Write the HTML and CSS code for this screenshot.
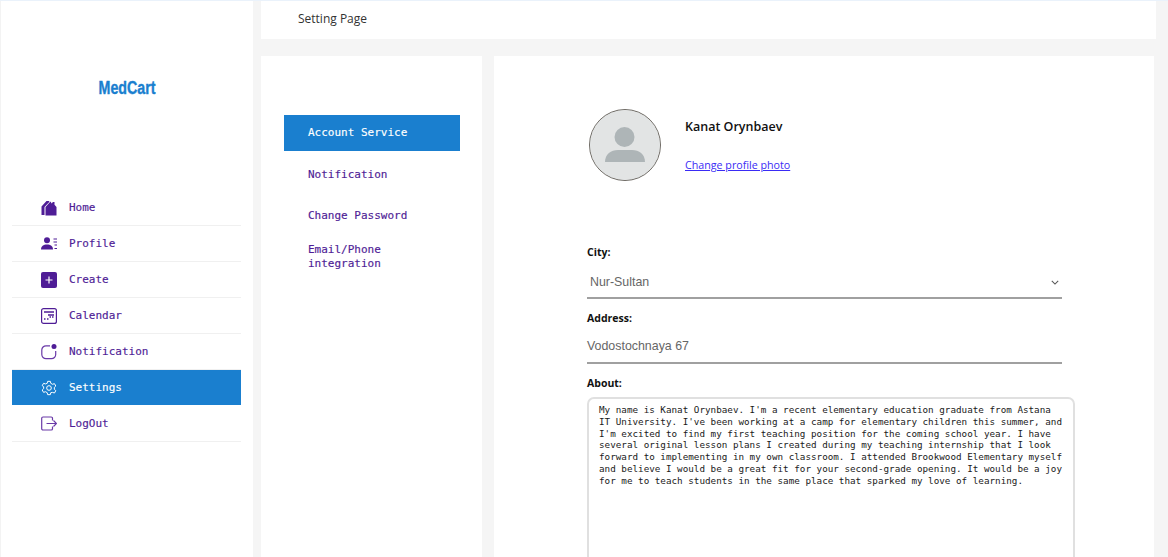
FILE: index.html
```html
<!DOCTYPE html>
<html lang="en">
<head>
<meta charset="utf-8">
<title>Setting Page</title>
<link rel="stylesheet" href="styles.css">
</head>
<body>
<div class="app">
  <aside class="sidebar">
    <div class="logo"><span>MedCart</span></div>
    <nav class="nav">
      <a class="nav-item"><svg class="ico" viewBox="0 0 16 16"><path d="M5.500 1 .5 6.500V15h3V7l5-5.200-.7-.8z" fill="#4f1d96"/><path d="M9.500 1.500 4.500 7v8.500h11V7l-2-2.200V2h-2v.8l-.8.800z" fill="#4f1d96"/></svg><span>Home</span></a>
      <a class="nav-item"><svg class="ico" viewBox="0 0 16 16"><circle cx="6" cy="4.200" r="3" fill="#4f1d96"/><path d="M0 13.500c0-3.200 2.400-5 6-5s6 1.800 6 5z" fill="#4f1d96"/><path d="M12.500 3h3.500M12.500 6h3.500M13.500 9h2.500M13.500 12.500h2.500" stroke="#4f1d96" stroke-width="1"/></svg><span>Profile</span></a>
      <a class="nav-item"><svg class="ico" viewBox="0 0 16 16"><rect width="16" height="16" rx="2" fill="#4f1d96"/><path d="M8 4.500v7M4.500 8h7" stroke="#fff" stroke-width="1.200"/></svg><span>Create</span></a>
      <a class="nav-item"><svg class="ico" viewBox="0 0 16 16" fill="none" stroke="#4f1d96"><rect x=".6" y=".6" width="14.800" height="14.800" rx="2" stroke-width="1.200"/><path d="M3 4h10M7 7h6" stroke-width="1.400"/><path d="M3 11h1.500M6 11h1.500M8.500 9h1.500M11 9h1.500" stroke-width="1.500"/></svg><span>Calendar</span></a>
      <a class="nav-item"><svg class="ico" viewBox="0 0 16 16" fill="none"><path d="M9 1.800H5A4.200 4.200 0 0 0 .8 6v4.500A4.200 4.200 0 0 0 5 14.700h5.500a4.200 4.200 0 0 0 4.200-4.200V7" stroke="#6a3aa8" stroke-width="1.200"/><circle cx="13" cy="2.600" r="2.500" fill="#4f1d96"/></svg><span>Notification</span></a>
      <a class="nav-item active"><svg class="ico" viewBox="0 0 24 24" fill="none" stroke="#fff" stroke-width="1.500" stroke-linejoin="round"><circle cx="12" cy="12" r="3.500"/><path d="M10 2h4l.7 3 2.500 1.400 3-.9 2 3.500-2.200 2.100v2.800l2.200 2.100-2 3.500-3-.9L14.700 19l-.7 3h-4l-.7-3-2.500-1.400-3 .9-2-3.500 2.200-2.100v-2.800L1.800 8.500l2-3.500 3 .9L9.300 5z"/></svg><span>Settings</span></a>
      <a class="nav-item"><svg class="ico" viewBox="0 0 16 16" fill="none" stroke="#6a3aa8" stroke-width="1.200"><path d="M11.500 4.500V2.300a1.300 1.300 0 0 0-1.300-1.300H2a1.300 1.300 0 0 0-1.300 1.300v10.400A1.300 1.300 0 0 0 2 14h8.200a1.300 1.300 0 0 0 1.300-1.300v-2.200"/><path d="M5.500 7.500h9.800M12.500 4.500l3 3-3 3"/></svg><span>LogOut</span></a>
    </nav>
  </aside>
  <main class="main">
    <header class="topbar">Setting Page</header>
    <div class="panels">
      <section class="submenu">
        <a class="sub-item active">Account Service</a>
        <a class="sub-item">Notification</a>
        <a class="sub-item">Change Password</a>
        <a class="sub-item multi">Email/Phone integration</a>
      </section>
      <section class="content">
        <div class="profile">
          <div class="avatar"><svg viewBox="0 0 70 70" width="70" height="70"><circle cx="35" cy="35" r="35" fill="#e2e4e4"/><circle cx="34.500" cy="27" r="10" fill="#aeb5b7"/><path d="M15 52c0-8 6-12 13-12h14c7 0 13 4 13 12z" fill="#aeb5b7"/></svg></div>
          <div class="profile-text">
            <div class="name">Kanat Orynbaev</div>
            <a class="change" href="#">Change profile photo</a>
          </div>
        </div>
        <div class="form">
          <label class="label">City:</label>
          <div class="field select"><span>Nur-Sultan</span><svg viewBox="0 0 10 6" width="8" height="5" fill="none" stroke="#555" stroke-width="1.300"><path d="M1 1l4 4 4-4"/></svg></div>
          <label class="label">Address:</label>
          <div class="field address">Vodostochnaya 67</div>
          <label class="label">About:</label>
          <textarea class="about" spellcheck="false" readonly>My name is Kanat Orynbaev. I'm a recent elementary education graduate from Astana
IT University. I've been working at a camp for elementary children this summer, and
I'm excited to find my first teaching position for the coming school year. I have
several original lesson plans I created during my teaching internship that I look
forward to implementing in my own classroom. I attended Brookwood Elementary myself
and believe I would be a great fit for your second-grade opening. It would be a joy
for me to teach students in the same place that sparked my love of learning.</textarea>
        </div>
      </section>
    </div>
  </main>
</div>
</body>
</html>
```
FILE: styles.css
```css
* { box-sizing: border-box; }
html, body { margin: 0; height: 100%; overflow: hidden; }
body { background: #f5f5f5; font-family: "Open Sans", "Noto Sans", sans-serif; }
.app { display: flex; height: 557px; overflow: hidden; border-top: 1px solid #eaf2fb; }
.sidebar { width: 253px; flex: none; background: #fff; padding: 0 12px; border-left: 1px solid #f3f3f3; }
.logo { margin-top: 76px; height: 22px; text-align: center; color: #1a7fcf; font: bold 18px/22px "Liberation Sans", sans-serif; -webkit-text-stroke: .4px #1a7fcf; }
.logo span { display: inline-block; transform: scaleX(.79); }
.nav { margin-top: 91px; display: flex; flex-direction: column; margin-left: -1px; }
.nav-item { display: flex; align-items: center; height: 36px; padding-left: 29px; gap: 12px; border-bottom: 1px solid #f0f0f0; color: #4f1d96; font: 11px/14px "DejaVu Sans Mono", monospace; -webkit-text-stroke: .15px; }
.nav-item.active { background: #1a7fcf padding-box; color: #fff; border-bottom-color: transparent; }
.ico { width: 16px; height: 16px; flex: none; }
.main { flex: 1; padding: 0 12px 0 8px; display: flex; flex-direction: column; min-width: 0; }
.topbar { height: 38px; background: #fff; padding-left: 37px; color: #333; font-size: 12px; line-height: 36px; flex: none; }
.panels { margin-top: 17px; display: flex; gap: 12px; flex: 1; min-height: 0; }
.submenu { width: 221px; flex: none; background: #fff; padding: 59px 22px 0 23px; display: flex; flex-direction: column; }
.sub-item { display: block; color: #4f1d96; padding-left: 24px; font: 11px/36px "DejaVu Sans Mono", monospace; -webkit-text-stroke: .15px; height: 36px; margin-bottom: 5.500px; }
.sub-item.active { background: #1a7fcf; color: #fff; }
.sub-item.multi { line-height: 14px; height: auto; margin-top: 3px; padding-right: 30px; }
.content { flex: 1; margin-right: 2px; background: #fff; padding: 53px 0 0 93px; min-width: 0; overflow: hidden; }
.profile { display: flex; align-items: flex-start; margin-left: 2px; gap: 24px; }
.avatar { width: 72px; height: 72px; border-radius: 50%; border: 1px solid #6e6a64; background: #e2e4e4; flex: none; overflow: hidden; }
.avatar svg { display: block; }
.profile-text { padding-top: 9px; display: flex; flex-direction: column; }
.name { font-size: 12.500px; font-weight: 600; line-height: 18px; color: #111; }
.change { margin-top: 22px; font-size: 10.700px; line-height: 15px; color: #3a2bf5; }
.form { margin-top: 64px; width: 488px; }
.label { display: block; font-size: 10.500px; font-weight: 700; color: #111; line-height: 15px; }
.field { width: 475px; border-bottom: 2px solid #a0a0a0; color: #666; font: 12.400px/15px "Liberation Sans", sans-serif; margin-bottom: 12px; }
.select { display: flex; align-items: center; justify-content: space-between; height: 39px; padding: 7px 3px 0; }
.address { height: 38px; padding-top: 13px; }
.about { display: block; width: 488px; height: 260px; margin-top: 6px; border: 2px solid #e0e0e0; border-radius: 7px; padding: 5px 10px; resize: none; overflow: hidden; white-space: pre; color: #1a1a1a; background: #fff; outline: none; font: 9.280px/11.830px "DejaVu Sans Mono", monospace; }
```
